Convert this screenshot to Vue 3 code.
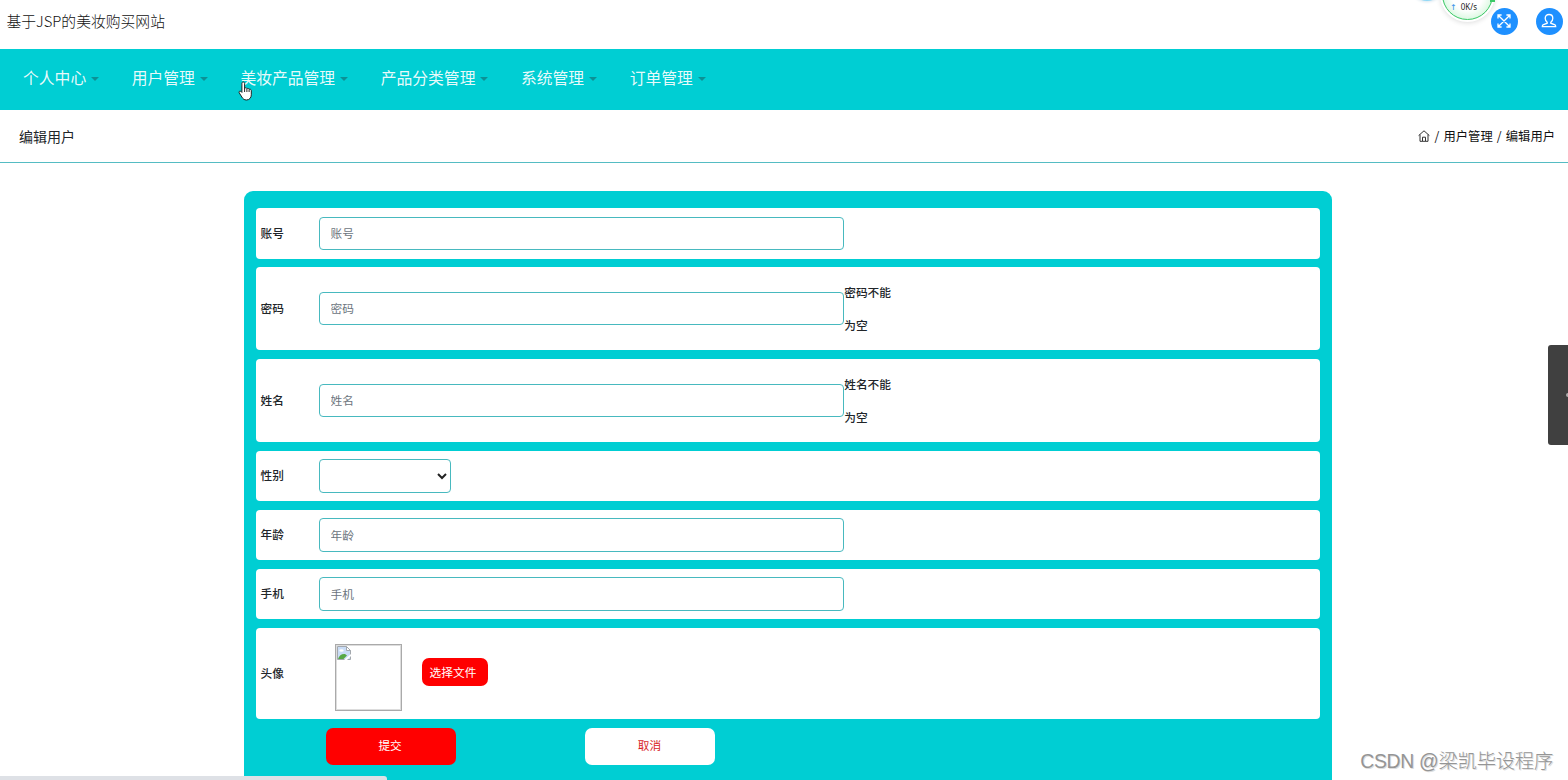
<template>
  <div class="page">
    <header class="topbar">
      <div class="site-name">基于JSP的美妆购买网站</div>
      <div class="top-actions">
        <button class="round-btn" title="全屏">
          <svg viewBox="0 0 16 16" width="16" height="16">
            <path d="M2.2 2.2l11.6 11.6M13.8 2.2L2.2 13.8M2 5.6V2h3.6M10.4 2H14v3.6M14 10.4V14h-3.6M5.6 14H2v-3.6" />
          </svg>
        </button>
        <button class="round-btn" title="用户">
          <svg viewBox="0 0 16 16" width="16" height="16">
            <path d="M8 1.5c2.3 0 3.8 1.6 3.8 3.8 0 1.7-.8 3.2-2 4v.9l4.2 1.6c.5.3.7.7.7 1.9H1.3c0-1.2.2-1.6.7-1.9l4.2-1.6v-.9c-1.2-.8-2-2.3-2-4C4.2 3.1 5.7 1.5 8 1.5z" />
          </svg>
        </button>
      </div>
    </header>

    <nav class="navbar">
      <a v-for="menu in menus" :key="menu" class="nav-item">
        {{ menu }}<span class="caret"></span>
      </a>
    </nav>

    <div class="breadcrumb-bar">
      <h3>编辑用户</h3>
      <div class="breadcrumb">
        <svg class="home" viewBox="0 0 12 12" width="12" height="12">
          <path d="M.6 5.6L6 .8l5.4 4.8M2 4.6v6.7h8V4.6M4.5 11V7.2h3V11" />
        </svg>
        <span>/ 用户管理 / 编辑用户</span>
      </div>
    </div>

    <form class="form-card" @submit.prevent>
      <div v-for="field in fields" :key="field.name" class="form-row" :class="field.type">
        <label>{{ field.label }}</label>
        <select v-if="field.type === 'select'" v-model="form[field.name]">
          <option value=""></option>
          <option>男</option>
          <option>女</option>
        </select>
        <template v-else-if="field.type === 'upload'">
          <div class="avatar">
            <svg viewBox="0 0 14 14" width="14" height="14">
              <path d="M.5.5h9l4 4v9H.5z" fill="#c9dcf6" stroke="#a3a8ae" />
              <path d="M9.5.5v4h4z" fill="#fff" stroke="#a3a8ae" />
              <ellipse cx="4.5" cy="4.5" rx="2.2" ry="1.2" fill="#fff" />
              <path d="M1 13c1-3.5 4-5.5 7-5l2 1.5L6.5 13z" fill="#57a845" />
              <path d="M7 14l7-6v2l-4 4z" fill="#fff" />
            </svg>
          </div>
          <button type="button" class="file-btn">选择文件</button>
        </template>
        <template v-else>
          <input v-model="form[field.name]" :placeholder="field.label" />
          <span v-if="field.error" class="error">{{ field.error }}</span>
        </template>
      </div>
      <div class="form-buttons">
        <button type="submit" class="btn submit">提交</button>
        <button type="button" class="btn cancel">取消</button>
      </div>
    </form>

    <div class="speed-bubble"></div>
    <div class="speed-ball">
      <span class="up">↑</span>0K/s
      <i></i>
    </div>
    <svg class="cursor" viewBox="0 0 16 20" width="16" height="20">
      <path d="M5.2 1c.9 0 1.4.6 1.4 1.5v4.6c.6-.5 1.9-.4 2.3.5.7-.4 1.9-.2 2.2.7.9-.4 2.2.1 2.2 1.4v4.1c0 2.8-1.8 5.2-4.8 5.2-2.4 0-3.6-1.2-4.6-2.9L1.2 11.8c-.7-1.1.7-2.3 1.7-1.4l1 1V2.5C3.9 1.6 4.4 1 5.2 1zM6.6 7v4M8.9 8v3M11.1 8.6V11" />
    </svg>
    <div class="side-handle"><i></i></div>
    <div class="status-bar"></div>
    <div class="watermark">CSDN @梁凯毕设程序</div>
  </div>
</template>

<script setup>
import { reactive } from 'vue'

const menus = ['个人中心', '用户管理', '美妆产品管理', '产品分类管理', '系统管理', '订单管理']

const fields = [
  { name: 'account', label: '账号', type: 'text' },
  { name: 'password', label: '密码', type: 'text', error: '密码不能为空' },
  { name: 'realname', label: '姓名', type: 'text', error: '姓名不能为空' },
  { name: 'gender', label: '性别', type: 'select' },
  { name: 'age', label: '年龄', type: 'text' },
  { name: 'phone', label: '手机', type: 'text' },
  { name: 'avatar', label: '头像', type: 'upload' }
]

const form = reactive({
  account: '',
  password: '',
  realname: '',
  gender: '',
  age: '',
  phone: ''
})
</script>

<style>
body {
  background: #fff;
  overflow: hidden;
}
</style>

<style scoped>
* {
  box-sizing: border-box;
}

.page {
  position: relative;
  height: 780px;
  overflow: hidden;
  font-family: "Noto Sans CJK SC", sans-serif;
  font-size: 11.7px;
  color: #212529;
}

button,
input,
select {
  font-family: inherit;
  font-size: inherit;
}

.topbar {
  display: flex;
  justify-content: space-between;
  height: 49px;
  padding: 0 5px 0 6.5px;
}

.site-name {
  font-size: 14.8px;
  font-weight: 300;
  line-height: 42px;
  color: #111;
}

.top-actions {
  display: flex;
  gap: 18px;
  padding-top: 8px;
}

.round-btn {
  display: flex;
  align-items: center;
  justify-content: center;
  width: 27px;
  height: 27px;
  padding: 0 1px 1px 0;
  border: none;
  border-radius: 50%;
  background: #1e90ff;
}

.round-btn svg {
  fill: none;
  stroke: #fff;
  stroke-width: 1.3;
}

.navbar {
  display: flex;
  align-items: center;
  gap: 32.8px;
  height: 61px;
  padding: 0 23px 4px;
  background: #00ced3;
}

.nav-item {
  display: flex;
  align-items: center;
  font-size: 15.8px;
  color: rgba(255, 255, 255, 0.92);
}

.caret {
  margin: 2px 0 0 4.7px;
  border: 4px solid transparent;
  border-top-color: #0c9195;
  border-bottom: none;
}

.breadcrumb-bar {
  display: flex;
  justify-content: space-between;
  align-items: center;
  height: 53px;
  padding: 0 13px 0 19px;
  border-bottom: 1px solid #55bcc3;
}

.breadcrumb-bar h3 {
  margin: 0;
  font-size: 14px;
  font-weight: 400;
}

.breadcrumb {
  display: flex;
  align-items: center;
  gap: 5px;
  font-size: 12.3px;
  word-spacing: 1.4px;
  color: #111;
}

.home {
  fill: none;
  stroke: #333;
}

.form-card {
  display: flex;
  flex-direction: column;
  gap: 8.4px;
  width: 1088px;
  height: 640px;
  margin: 28.4px 0 0 244px;
  padding: 16.6px 12px;
  border-radius: 9px;
  background: #00ced3;
}

.form-row {
  display: flex;
  flex-shrink: 0;
  align-items: center;
  min-height: 50.6px;
  padding: 0 4.6px;
  border-radius: 4px;
  background: #fff;
}

.form-row label {
  width: 58px;
  padding-bottom: 2.4px;
  font-weight: 500;
}

.form-row input,
.form-row select {
  width: 525.6px;
  height: 33.4px;
  padding: 0 11px 1.8px;
  border: 1px solid #48b9bf;
  border-radius: 4px;
  outline: none;
  background: #fff;
  color: #495057;
}

.form-row input::placeholder {
  color: #6c757d;
  opacity: 1;
}

.form-row select {
  width: 132.6px;
  padding: 0 0 0 11px;
  color: #222;
}

.error {
  width: 50px;
  padding: 8px 0 9px;
  line-height: 33.25px;
  font-weight: 500;
}

.form-row.upload {
  min-height: 91.5px;
}

.avatar {
  width: 67px;
  height: 67px;
  margin: 8px 20px 0 16.4px;
  padding: 1px;
  border: 1px solid #aaa;
  outline: 1px solid #ddd;
  outline-offset: -2px;
  line-height: 0;
}

.file-btn {
  width: 66px;
  height: 28px;
  margin-bottom: 2px;
  padding: 0 4px 1px 0;
  border: none;
  border-radius: 7px;
  background: #f00;
  color: #fff;
}

.form-buttons {
  display: flex;
  gap: 129.4px;
  padding-left: 69.6px;
}

.btn {
  width: 130px;
  height: 37px;
  padding: 0 1px 3px 0;
  border: none;
  border-radius: 7px;
}

.submit {
  background: #f00;
  color: #fff;
}

.cancel {
  background: #fff;
  color: #d81e1e;
}

/* things floating over the page */
.speed-bubble {
  position: absolute;
  top: -27px;
  left: 1412px;
  width: 30px;
  height: 28px;
  border-radius: 50%;
  background: #8fd8f6;
  box-shadow: 0 0 3px 1px #d5e4ee;
}

.speed-ball {
  position: absolute;
  top: -31px;
  left: 1442px;
  width: 51px;
  height: 51px;
  padding: 31px 0 0 7px;
  border: 1px solid #3cc967;
  border-radius: 50%;
  background: radial-gradient(circle, #fff 45%, #d8f8df 75%);
  box-shadow: 0 0 0 2px #fff, 0 1px 5px 2px #ddd;
  font-family: "Noto Sans", sans-serif;
  font-size: 8px;
  line-height: 12px;
  white-space: nowrap;
  color: #222;
}

.speed-ball .up {
  margin-right: 4px;
  font-family: "DejaVu Sans", sans-serif;
  color: #2a8be8;
}

.speed-ball i {
  position: absolute;
  top: 28px;
  right: -3px;
  width: 5px;
  height: 4px;
  background: #3cc967;
}

.cursor {
  position: absolute;
  top: 81px;
  left: 238px;
  fill: #fff;
  stroke: #222;
  stroke-width: 1;
}

.side-handle {
  position: absolute;
  top: 345px;
  right: 0;
  width: 20px;
  height: 100px;
  border-radius: 3px 0 0 3px;
  background: #404040;
  overflow: hidden;
}

.side-handle i {
  position: absolute;
  top: 48px;
  right: -2px;
  width: 4px;
  height: 4px;
  border-radius: 50%;
  background: #aaa;
}

.status-bar {
  position: absolute;
  bottom: 0;
  left: 0;
  width: 387px;
  height: 4px;
  border-radius: 0 3px 0 0;
  background: #dee1e6;
}

.watermark {
  position: absolute;
  right: 15px;
  bottom: 4px;
  font-family: "Liberation Sans", "Noto Sans CJK SC", sans-serif;
  font-size: 19.4px;
  font-weight: 300;
  line-height: 30px;
  letter-spacing: -0.3px;
  color: #959595;
  text-shadow: 1px 1px 0 #ddd;
}
</style>
